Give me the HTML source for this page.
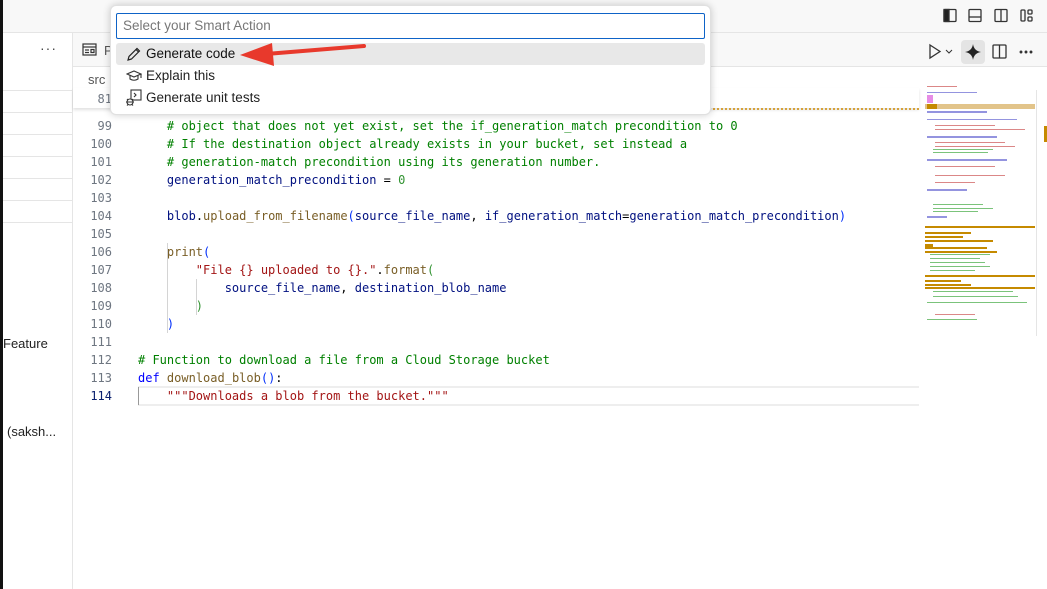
<!DOCTYPE html>
<html><head><meta charset="utf-8"><style>
*{margin:0;padding:0;box-sizing:border-box}
body{width:1047px;height:589px;overflow:hidden;background:#fff;font-family:"Liberation Sans",sans-serif;position:relative}
.abs{position:absolute}
.code{font-family:"DejaVu Sans Mono","Liberation Mono",monospace;font-size:12px;white-space:pre;line-height:18px}
.ln{position:absolute;left:72px;width:40px;text-align:right;color:#6e7681;font-family:"DejaVu Sans Mono",monospace;font-size:12px;line-height:18px}
.c{color:#008000}.v{color:#001080}.k{color:#0000ff}.f{color:#795e26}.s{color:#a31515}.p{color:#0431fa}.q{color:#319331}
.row{position:absolute;left:138px;height:18px}
.sl{position:absolute;left:3px;width:69px;height:1px;background:#e5e5e5}
</style></head><body>
<!-- top bar -->
<div class="abs" style="left:0;top:0;width:1047px;height:33px;background:#f8f8f8;border-bottom:1px solid #e5e5e5"></div>
<div class="abs" style="left:0;top:0;width:3px;height:589px;background:#111"></div>
<!-- top right icons -->
<svg class="abs" style="left:940px;top:7px" width="105" height="18" viewBox="0 0 105 18" fill="none" stroke="#333" stroke-width="1.3">
<rect x="4" y="2.5" width="12" height="12" rx="1"/><rect x="4" y="2.5" width="5" height="12" fill="#222"/>
<rect x="29" y="2.5" width="12" height="12" rx="1"/><line x1="29" y1="10" x2="41" y2="10"/>
<rect x="55" y="2.5" width="12" height="12" rx="1"/><line x1="61" y1="2.5" x2="61" y2="14.5"/>
<rect x="81" y="3" width="4" height="11" rx="1"/><rect x="88" y="3" width="4" height="4" rx="1"/><rect x="88" y="10" width="4" height="4" rx="1"/>
</svg>
<!-- sidebar -->
<div class="abs" style="left:72px;top:33px;width:1px;height:556px;background:#e5e5e5"></div>
<div class="abs" style="left:40px;top:40px;font-size:14px;color:#444;letter-spacing:1px">···</div>
<div class="sl" style="top:90px"></div><div class="sl" style="top:112px"></div><div class="sl" style="top:134px"></div><div class="sl" style="top:156px"></div><div class="sl" style="top:178px"></div><div class="sl" style="top:200px"></div><div class="sl" style="top:222px"></div>
<div class="abs" style="left:3px;top:336px;font-size:13px;color:#222">Feature</div>
<div class="abs" style="left:7px;top:424px;font-size:13px;color:#222">(saksh...</div>
<!-- tab row -->
<div class="abs" style="left:73px;top:33px;width:974px;height:34px;background:#f8f8f8;border-bottom:1px solid #e5e5e5"></div>
<svg class="abs" style="left:82px;top:43px" width="16" height="14" fill="none" stroke="#333" stroke-width="1.2"><rect x="1" y="1" width="13" height="11"/><line x1="1" y1="4" x2="14" y2="4"/><line x1="3" y1="7" x2="7" y2="7"/><line x1="3" y1="9.5" x2="7" y2="9.5"/><rect x="9" y="6.5" width="3" height="3"/></svg>
<div class="abs" style="left:104px;top:43px;font-size:13px;color:#555">P</div>
<svg class="abs" style="left:925px;top:40px" width="120" height="24" fill="none" stroke="#333" stroke-width="1.3">
<path d="M5 5 L15 11.5 L5 18 Z"/><path d="M21 10 l3 3 l3 -3" stroke-width="1"/>
<rect x="36" y="0" width="24" height="24" rx="4" fill="#e4e4e4" stroke="none"/>
<path d="M48 4 Q49 11 56 12 Q49 13 48 20 Q47 13 40 12 Q47 11 48 4Z" fill="#222" stroke="none"/>
<rect x="68" y="5" width="13" height="13" rx="1"/><line x1="74.5" y1="5" x2="74.5" y2="18"/>
<circle cx="96" cy="12" r="0.8" fill="#333"/><circle cx="101" cy="12" r="0.8" fill="#333"/><circle cx="106" cy="12" r="0.8" fill="#333"/>
</svg>
<!-- breadcrumb -->
<div class="abs" style="left:88px;top:72px;font-size:13px;color:#555">src</div>
<!-- sticky -->
<div class="abs" style="left:73px;top:88px;width:846px;height:20px;background:#fff;box-shadow:0 2px 3px rgba(0,0,0,0.12)"></div>
<div class="ln" style="top:90px">81</div>
<div class="abs" style="left:138px;top:108px;width:781px;height:0;border-top:2px dotted #d6a23a"></div>
<!-- code lines -->
<div class="ln" style="top:117px">99</div><div class="row code" style="top:117px">    <span class="c"># object that does not yet exist, set the if_generation_match precondition to 0</span></div>
<div class="ln" style="top:135px">100</div><div class="row code" style="top:135px">    <span class="c"># If the destination object already exists in your bucket, set instead a</span></div>
<div class="ln" style="top:153px">101</div><div class="row code" style="top:153px">    <span class="c"># generation-match precondition using its generation number.</span></div>
<div class="ln" style="top:171px">102</div><div class="row code" style="top:171px">    <span class="v">generation_match_precondition</span> = <span class="q">0</span></div>
<div class="ln" style="top:189px">103</div>
<div class="ln" style="top:207px">104</div><div class="row code" style="top:207px">    <span class="v">blob</span>.<span class="f">upload_from_filename</span><span class="p">(</span><span class="v">source_file_name</span>, <span class="v">if_generation_match</span>=<span class="v">generation_match_precondition</span><span class="p">)</span></div>
<div class="ln" style="top:225px">105</div>
<div class="ln" style="top:243px">106</div><div class="row code" style="top:243px">    <span class="f">print</span><span class="p">(</span></div>
<div class="ln" style="top:261px">107</div><div class="row code" style="top:261px">        <span class="s">"File {} uploaded to {}."</span>.<span class="f">format</span><span style="color:#319331">(</span></div>
<div class="ln" style="top:279px">108</div><div class="row code" style="top:279px">            <span class="v">source_file_name</span>, <span class="v">destination_blob_name</span></div>
<div class="ln" style="top:297px">109</div><div class="row code" style="top:297px">        <span style="color:#319331">)</span></div>
<div class="ln" style="top:315px">110</div><div class="row code" style="top:315px">    <span class="p">)</span></div>
<div class="abs" style="left:167px;top:243px;width:1px;height:90px;background:#d4d4d4"></div>
<div class="abs" style="left:196px;top:279px;width:1px;height:36px;background:#d4d4d4"></div>
<div class="ln" style="top:333px">111</div>
<div class="ln" style="top:351px">112</div><div class="row code" style="top:351px"><span class="c"># Function to download a file from a Cloud Storage bucket</span></div>
<div class="ln" style="top:369px">113</div><div class="row code" style="top:369px"><span class="k">def</span> <span class="f">download_blob</span><span class="p">()</span>:</div>
<div class="abs" style="left:138px;top:386px;width:781px;height:20px;border-top:2px solid #eee;border-bottom:2px solid #eee"></div>
<div class="abs" style="left:138px;top:387px;width:1px;height:18px;background:#999"></div>
<div class="ln" style="top:387px;color:#0b216f">114</div><div class="row code" style="top:387px">    <span class="s">"""Downloads a blob from the bucket."""</span></div>
<!-- minimap -->
<svg class="abs" style="left:925px;top:86px" width="122" height="250">
<rect x="0" y="18" width="110" height="5" fill="#e2c48a"/><rect x="2" y="18" width="10" height="5" fill="#c58a00"/>
<g fill="#7a7ad8" opacity="0.8"><rect x="2" y="6" width="50" height="1"/><rect x="2" y="25" width="60" height="2"/><rect x="2" y="33" width="90" height="1"/><rect x="2" y="50" width="70" height="2"/><rect x="2" y="73" width="80" height="2"/><rect x="2" y="103" width="40" height="2"/><rect x="2" y="130" width="20" height="2"/></g>
<g fill="#e070e0" opacity="0.8"><rect x="2" y="9" width="6" height="8"/></g>
<g fill="#c55" opacity="0.7"><rect x="2" y="0" width="30" height="1"/><rect x="10" y="39" width="60" height="1"/><rect x="10" y="43" width="90" height="1"/><rect x="10" y="56" width="70" height="1"/><rect x="10" y="60" width="80" height="1"/><rect x="10" y="80" width="60" height="1"/><rect x="10" y="89" width="70" height="1"/><rect x="10" y="96" width="40" height="1"/><rect x="10" y="228" width="40" height="1"/></g>
<g fill="#4a4" opacity="0.7"><rect x="8" y="63" width="60" height="1"/><rect x="8" y="66" width="55" height="1"/><rect x="8" y="118" width="50" height="1"/><rect x="8" y="122" width="60" height="1"/><rect x="8" y="125" width="45" height="1"/><rect x="5" y="168" width="60" height="1"/><rect x="5" y="172" width="50" height="1"/><rect x="5" y="176" width="55" height="1"/><rect x="5" y="180" width="60" height="1"/><rect x="5" y="184" width="45" height="1"/><rect x="8" y="205" width="80" height="1"/><rect x="8" y="210" width="85" height="1"/><rect x="2" y="216" width="100" height="1"/><rect x="2" y="233" width="50" height="1"/></g>
<g fill="#c58a00"><rect x="0" y="140" width="110" height="2"/><rect x="0" y="146" width="46" height="2"/><rect x="0" y="150" width="38" height="2"/><rect x="0" y="154" width="68" height="2"/><rect x="0" y="158" width="8" height="3"/><rect x="0" y="161" width="62" height="2"/><rect x="0" y="165" width="72" height="2"/><rect x="0" y="189" width="110" height="2"/><rect x="0" y="194" width="36" height="2"/><rect x="0" y="198" width="46" height="2"/><rect x="0" y="201" width="110" height="2"/></g>
<rect x="111" y="4" width="1" height="246" fill="#e5e5e5"/><rect x="119" y="40" width="3" height="16" fill="#c58a00"/>
</svg>
<!-- popup -->
<div class="abs" style="left:110px;top:5px;width:601px;height:110px;background:#fff;border-radius:6px;box-shadow:0 0 8px rgba(0,0,0,0.2);border:1px solid #e0e0e0"></div>
<div class="abs" style="left:116px;top:13px;width:589px;height:26px;border:1px solid #0e63c7;border-radius:2px;font-size:13.5px;color:#777;padding:4px 0 0 6px">Select your Smart Action</div>
<div class="abs" style="left:116px;top:43px;width:589px;height:22px;background:#e8e8e8;border-radius:3px"></div>
<svg class="abs" style="left:126px;top:46px" width="16" height="16" fill="none" stroke="#222" stroke-width="1.2"><path d="M2 14 L3 10.5 L11 2.5 L13.5 5 L5.5 13 Z M2 14 L5.5 13 M10 3.5 L12.5 6"/></svg>
<div class="abs" style="left:146px;top:46px;font-size:13.5px;color:#111">Generate code</div>
<svg class="abs" style="left:126px;top:69px" width="16" height="14" fill="none" stroke="#333" stroke-width="1.1"><path d="M1 5 L8 2 L15 5 L8 8 Z M4 6.5 V10 Q8 12.5 12 10 V6.5 M15 5 V9"/></svg>
<div class="abs" style="left:146px;top:68px;font-size:13.5px;color:#222">Explain this</div>
<svg class="abs" style="left:125px;top:89px" width="18" height="18" fill="none" stroke="#333" stroke-width="1.1"><rect x="6" y="1" width="10" height="10"/><path d="M9 4 L11 6 L9 8"/><circle cx="5" cy="13" r="3" fill="#fff"/><path d="M1 13 H9 M2 10 L3 11 M8 10 L7 11 M2 16.5 L3 15.5 M8 16.5 L7 15.5"/></svg>
<div class="abs" style="left:146px;top:90px;font-size:13.5px;color:#222">Generate unit tests</div>
<!-- arrow -->
<svg class="abs" style="left:236px;top:36px" width="132" height="34"><line x1="128" y1="10" x2="30" y2="18" stroke="#e8392c" stroke-width="4" stroke-linecap="round"/><path d="M4 19 L36 7 L38 30 Z" fill="#e8392c"/></svg>
</body></html>
